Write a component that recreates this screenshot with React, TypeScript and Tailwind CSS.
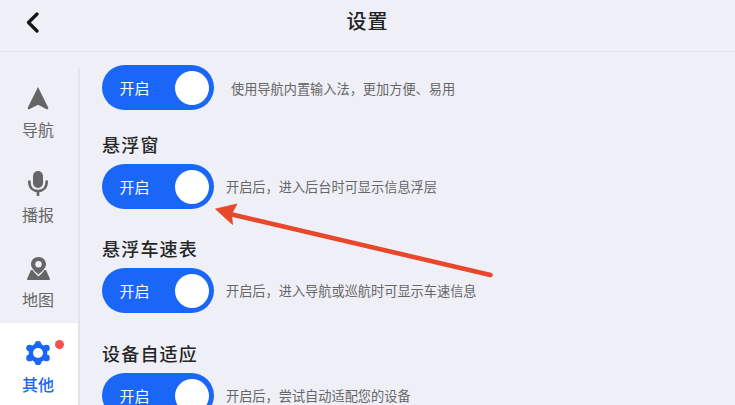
import React from "react";

const fontStack = { fontFamily: '"Noto Sans CJK SC", "Noto Sans", sans-serif' };

const NavIcon = () => (
  <svg width="26" height="26" viewBox="0 0 26 26">
    <path d="M13 2 L23.2 22.4 Q23.8 25 21.2 24 L13 19.8 L4.8 24 Q2.2 25 2.8 22.4 Z" fill="#666" />
  </svg>
);

const MicIcon = () => (
  <svg width="26" height="28" viewBox="0 0 26 28">
    <rect x="8" y="2" width="10" height="17" rx="5" fill="#666" />
    <path d="M4.3 12.5 C4.3 19 8 22 13 22 C18 22 21.7 19 21.7 12.5" fill="none" stroke="#666" strokeWidth="2.6" strokeLinecap="round" />
    <rect x="11.7" y="21" width="2.6" height="6" fill="#666" />
  </svg>
);

const MapIcon = () => (
  <svg width="26" height="26" viewBox="0 0 26 26">
    <path fillRule="evenodd" d="M13.5 2 C9.1 2 6 5.2 6 9.2 C6 13 10.1 16.6 13.5 19.4 C16.9 16.6 21 13 21 9.2 C21 5.2 17.9 2 13.5 2 Z M13.5 6 A3.2 3.2 0 1 1 13.5 12.4 A3.2 3.2 0 1 1 13.5 6 Z" fill="#666" />
    <path d="M6 15 L2 24 Q1.8 25 3 25 L24 25 Q25.2 25 25 24 L21 15 L19.6 15 C17.8 17.4 15.6 19.6 13.5 21.4 C11.4 19.6 9.2 17.4 7.4 15 Z" fill="#666" />
  </svg>
);

const GearIcon = () => (
  <svg width="26" height="28" viewBox="0 0 26 28">
    <circle cx="13" cy="14" r="9.4" fill="#1a66f5" />
    <circle cx="13" cy="5.3" r="3.4" fill="#1a66f5" />
    <circle cx="13" cy="22.7" r="3.4" fill="#1a66f5" />
    <circle cx="4.6" cy="9.1" r="3.4" fill="#1a66f5" />
    <circle cx="21.4" cy="9.1" r="3.4" fill="#1a66f5" />
    <circle cx="4.6" cy="18.9" r="3.4" fill="#1a66f5" />
    <circle cx="21.4" cy="18.9" r="3.4" fill="#1a66f5" />
    <circle cx="13" cy="14" r="5" fill="#fff" />
  </svg>
);

interface SideItemProps {
  icon: React.ReactNode;
  label: string;
  active?: boolean;
}

const SideItem: React.FC<SideItemProps> = ({ icon, label, active }) => (
  <div className={`relative flex h-[85px] w-[78px] shrink-0 flex-col items-center pr-[2px] pt-[17px] ${active ? "bg-white" : ""}`}>
    <div className="flex h-[26px] items-center justify-center">{icon}</div>
    <span className={`mt-[6px] text-[16px] leading-[24px] ${active ? "font-medium text-[#1a66f5]" : "text-[#666666]"}`}>{label}</span>
    {active && <span className="absolute left-[54.5px] top-[16.5px] h-[9px] w-[9px] rounded-full bg-[#f9504c]" />}
  </div>
);

const Toggle: React.FC = () => (
  <div className="flex h-[45px] w-[112px] shrink-0 items-center justify-between rounded-full bg-[#1a66f7] pl-[17.5px] pr-[5px]">
    <span className="text-[15px] leading-none text-white">开启</span>
    <span className="h-[34px] w-[34px] rounded-full bg-white" />
  </div>
);

interface SettingRowProps {
  title?: string;
  desc: string;
  descClass?: string;
}

const SettingRow: React.FC<SettingRowProps> = ({ title, desc, descClass = "ml-3" }) => (
  <div className="shrink-0">
    {title && <h3 className="mb-[8px] h-[24px] text-[18px] font-medium leading-[24px] tracking-[1.2px] text-[#262626]">{title}</h3>}
    <div className="flex items-center">
      <Toggle />
      <span className={`${descClass} text-[13.2px] leading-none text-[#666666]`}>{desc}</span>
    </div>
  </div>
);

export default function App() {
  return (
    <div className="relative flex h-[405px] w-[735px] flex-col overflow-hidden bg-[#eff0f7]" style={fontStack}>
      <header className="relative flex h-[52px] shrink-0 items-center justify-center border-b border-[#e3e4ea] pb-[9px]">
        <svg className="absolute left-[25px] top-[12px]" width="15" height="21" viewBox="0 0 15 21">
          <path d="M12 2 L3.5 10.5 L12 19" fill="none" stroke="#151515" strokeWidth="3.2" strokeLinecap="round" strokeLinejoin="round" />
        </svg>
        <span className="text-[20px] font-medium leading-none tracking-[1px] text-[#222222]">设置</span>
      </header>

      <div className="flex min-h-0 flex-1">
        <aside className="mt-[16px] flex w-[80px] shrink-0 flex-col border-r-2 border-[#e3e4ea]">
          <SideItem icon={<NavIcon />} label="导航" />
          <SideItem icon={<MicIcon />} label="播报" />
          <SideItem icon={<MapIcon />} label="地图" />
          <SideItem icon={<GearIcon />} label="其他" active />
        </aside>

        <main className="flex flex-1 flex-col pl-[22px] pt-[13px]">
          <SettingRow desc="使用导航内置输入法，更加方便、易用" descClass="ml-[17px] mt-[2px]" />
          <div className="mt-[22px]">
            <SettingRow title="悬浮窗" desc="开启后，进入后台时可显示信息浮层" />
          </div>
          <div className="mt-[27px]">
            <SettingRow title="悬浮车速表" desc="开启后，进入导航或巡航时可显示车速信息" />
          </div>
          <div className="mt-[28px]">
            <SettingRow title="设备自适应" desc="开启后，尝试自动适配您的设备" />
          </div>
        </main>
      </div>

      {/* annotation arrow over the page */}
      <svg className="absolute left-0 top-0" width="735" height="405" viewBox="0 0 735 405">
        <path d="M490.5 275 L230 214" fill="none" stroke="#e8472b" strokeWidth="4.6" strokeLinecap="round" />
        <path d="M215.5 209 L237 204 L231.5 214 L232.5 224.5 Z" fill="#e8472b" stroke="#e8472b" strokeWidth="0.8" strokeLinejoin="round" />
      </svg>
    </div>
  );
}
